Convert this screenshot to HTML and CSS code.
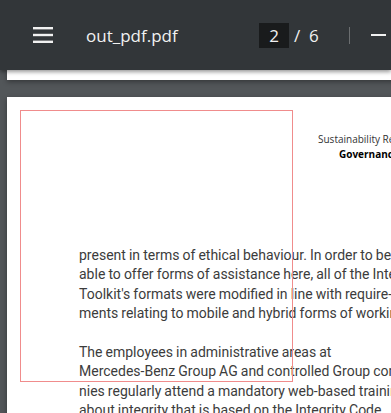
FILE: index.html
```html
<!DOCTYPE html>
<html lang="en">
<head>
    <meta charset="UTF-8">
    <meta name="viewport" content="width=device-width, initial-scale=1.0">
    <title>out_pdf.pdf</title>
    <link rel="stylesheet" href="styles.css">
</head>
<body>

<div class="toolbar">
    <svg class="menu-icon" width="20" height="16" viewBox="0 0 20 16">
        <rect x="0" y="0" width="20" height="2.4" fill="#f1f1f1"/>
        <rect x="0" y="6.8" width="20" height="2.4" fill="#f1f1f1"/>
        <rect x="0" y="13.6" width="20" height="2.4" fill="#f1f1f1"/>
    </svg>
    <div class="title">out_pdf.pdf</div>
    <div class="pager">
        <span class="page-input">2</span>
        <span class="page-total">/&nbsp;&nbsp;6</span>
    </div>
    <div class="separator"></div>
    <div class="zoom-out"></div>
</div>

<div class="viewer">
    <div class="page page-prev"></div>

    <div class="page">
        <div class="page-header">
            <div class="report">Sustainability Report 2022</div>
            <div class="section">Governance</div>
        </div>
        <div class="page-text">
            <p>present in terms of ethical behaviour. In order to be<br>
            able to offer forms of assistance here, all of the Integrity<br>
            Toolkit's formats were modified in line with require-<br>
            ments relating to mobile and hybrid forms of working.</p>
            <p>The employees in administrative areas at<br>
            Mercedes-Benz Group AG and controlled Group compa-<br>
            nies regularly attend a mandatory web-based training<br>
            about integrity that is based on the Integrity Code.</p>
        </div>
        <div class="selection-box"></div>
    </div>
</div>

</body>
</html>
```

FILE: styles.css
```css
body {
    margin: 0;
    width: 391px;
    height: 413px;
    overflow: hidden;
    background-color: #525659;
    font-family: "Open Sans", "Noto Sans", sans-serif;
}

.toolbar {
    display: flex;
    align-items: center;
    height: 70px;
    padding-left: 33px;
    background-color: #323639;
    color: #f1f1f1;
    box-shadow: 0 2px 4px rgba(0, 0, 0, 0.4);
    position: relative;
    z-index: 1;
    white-space: nowrap;
}

.menu-icon {
    flex-shrink: 0;
}

.title {
    width: 173px;
    flex-shrink: 0;
    margin-left: 33px;
    font-size: 17px;
}

.pager {
    display: flex;
    align-items: center;
    flex-shrink: 0;
    font-size: 17px;
}

.page-input {
    width: 30px;
    height: 25px;
    line-height: 25px;
    text-align: center;
    background-color: #191b1c;
}

.page-total {
    margin-left: 5px;
}

.separator {
    width: 1px;
    height: 17px;
    margin-left: 30px;
    background-color: #6b6e70;
    flex-shrink: 0;
}

.zoom-out {
    width: 15px;
    height: 2px;
    margin-left: 21px;
    background-color: #f1f1f1;
    flex-shrink: 0;
}

.viewer {
    padding-left: 7px;
}

.page {
    width: 520px;
    height: 700px;
    background-color: #fff;
    box-shadow: 0 2px 5px rgba(0, 0, 0, 0.35);
    position: relative;
}

.page-prev {
    height: 10px;
    margin-bottom: 17px;
}

.page-header {
    padding-top: 35px;
    padding-left: 311px;
    font-family: "Open Sans", "Noto Sans", sans-serif;
    font-size: 10px;
    line-height: 15px;
    color: #333;
    white-space: nowrap;
}

.page-header .section {
    margin-left: 21px;
    font-weight: bold;
    color: #000;
}

.page-text {
    padding-top: 84px;
    padding-left: 72px;
    font-family: Roboto, "Noto Sans", sans-serif;
    font-size: 14px;
    word-spacing: -0.4px;
    line-height: 19.4px;
    color: #3c3c3c;
    white-space: nowrap;
}

.page-text p {
    margin: 0 0 19.4px;
}

.selection-box {
    position: absolute;
    left: 13px;
    top: 13px;
    width: 271px;
    height: 270px;
    border: 1px solid #f08c8c;
}
```
